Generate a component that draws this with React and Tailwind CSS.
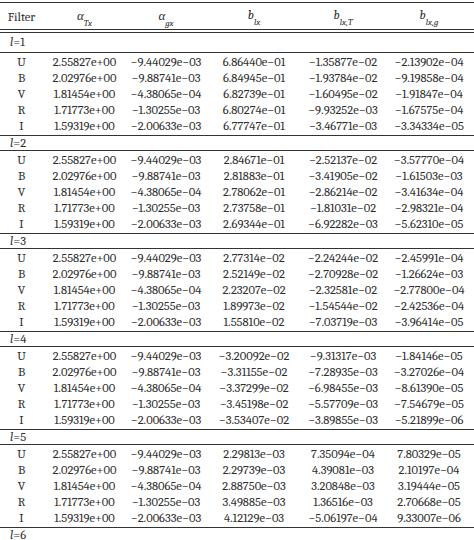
const alphaT = ["2.55827e+00", "2.02976e+00", "1.81454e+00", "1.71773e+00", "1.59319e+00"];
const alphaG = ["−9.44029e−03", "−9.88741e−03", "−4.38065e−04", "−1.30255e−03", "−2.00633e−03"];
const filters = ["U", "B", "V", "R", "I"];

const groups = [
  {
    l: 1,
    rows: [
      ["6.86440e−01", "−1.35877e−02", "−2.13902e−04"],
      ["6.84945e−01", "−1.93784e−02", "−9.19858e−04"],
      ["6.82739e−01", "−1.60495e−02", "−1.91847e−04"],
      ["6.80274e−01", "−9.93252e−03", "−1.67575e−04"],
      ["6.77747e−01", "−3.46771e−03", "−3.34334e−05"],
    ],
  },
  {
    l: 2,
    rows: [
      ["2.84671e−01", "−2.52137e−02", "−3.57770e−04"],
      ["2.81883e−01", "−3.41905e−02", "−1.61503e−03"],
      ["2.78062e−01", "−2.86214e−02", "−3.41634e−04"],
      ["2.73758e−01", "−1.81031e−02", "−2.98321e−04"],
      ["2.69344e−01", "−6.92282e−03", "−5.62310e−05"],
    ],
  },
  {
    l: 3,
    rows: [
      ["2.77314e−02", "−2.24244e−02", "−2.45991e−04"],
      ["2.52149e−02", "−2.70928e−02", "−1.26624e−03"],
      ["2.23207e−02", "−2.32581e−02", "−2.77800e−04"],
      ["1.89973e−02", "−1.54544e−02", "−2.42536e−04"],
      ["1.55810e−02", "−7.03719e−03", "−3.96414e−05"],
    ],
  },
  {
    l: 4,
    rows: [
      ["−3.20092e−02", "−9.31317e−03", "−1.84146e−05"],
      ["−3.31155e−02", "−7.28935e−03", "−3.27026e−04"],
      ["−3.37299e−02", "−6.98455e−03", "−8.61390e−05"],
      ["−3.45198e−02", "−5.57709e−03", "−7.54679e−05"],
      ["−3.53407e−02", "−3.89855e−03", "−5.21899e−06"],
    ],
  },
  {
    l: 5,
    rows: [
      ["2.29813e−03", "7.35094e−04", "7.80329e−05"],
      ["2.29739e−03", "4.39081e−03", "2.10197e−04"],
      ["2.88750e−03", "3.20848e−03", "3.19444e−05"],
      ["3.49885e−03", "1.36516e−03", "2.70668e−05"],
      ["4.12129e−03", "−5.06197e−04", "9.33007e−06"],
    ],
  },
];

const cols = "grid grid-cols-[43px_83px_80px_96px_82px_90px]";

function Sym({ base, sub, greek }) {
  return (
    <span className="italic">
      {greek ? <span className="text-[13px]">α</span> : base}
      <sub className="text-[9px] align-[-4px] leading-none">{sub}</sub>
    </span>
  );
}

function GroupLabel({ l, first }) {
  return (
    <div className={`border-b border-[#333] flex items-center pl-[10px] ${first ? "h-[20px]" : "h-4 border-t"}`}>
      <span className="italic">l</span>
      <span>={l}</span>
    </div>
  );
}

function DataRows({ rows }) {
  return (
    <div className="py-px">
      {rows.map((r, i) => (
        <div key={i} className={`${cols} h-4 items-center text-center`}>
          <span>{filters[i]}</span>
          <span>{alphaT[i]}</span>
          <span>{alphaG[i]}</span>
          <span>{r[0]}</span>
          <span>{r[1]}</span>
          <span>{r[2]}</span>
        </div>
      ))}
    </div>
  );
}

export default function App() {
  return (
    <div className="w-[474px] h-[540px] overflow-hidden bg-white text-[#2e2e2e] text-[12.5px] leading-none font-serif [font-family:Liberation_Serif,serif] pt-[2px]">
      <div className="border-t border-[#333]">
        <div className={`${cols} h-[26px] items-center text-center pt-[2px]`}>
          <span>Filter</span>
          <Sym greek sub="Tx" />
          <Sym greek sub="gx" />
          <Sym base="b" sub="lx" />
          <Sym base="b" sub="lx,T" />
          <Sym base="b" sub="lx,g" />
        </div>
        <div className="border-t border-b border-[#333] h-[4px]" />
        {groups.map((g, i) => (
          <div key={g.l}>
            <GroupLabel l={g.l} first={i === 0} />
            <DataRows rows={g.rows} />
          </div>
        ))}
        <GroupLabel l={6} />
      </div>
    </div>
  );
}
